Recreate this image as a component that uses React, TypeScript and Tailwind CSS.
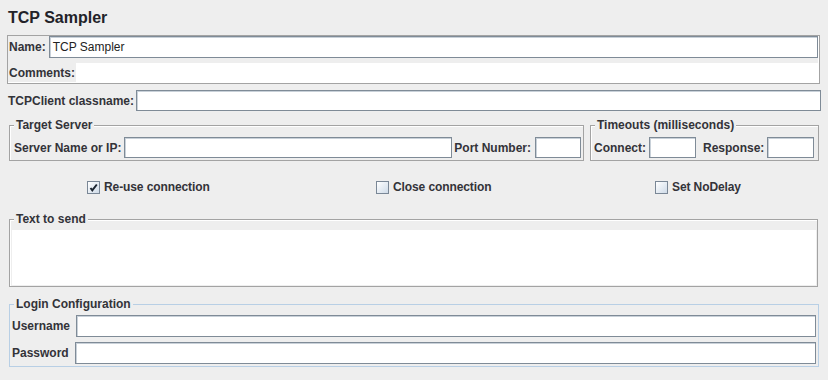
import React from 'react';

const label = 'font-bold text-[12px] leading-[14px] text-[#333339] whitespace-nowrap';
const field = 'bg-white border border-[#7f8b97] shadow-[inset_1px_1px_0_#c9d1d9]';

function Field({ className = '', value = '' }: { className?: string; value?: string }) {
    return (
        <div className={`${field} ${className} flex items-center pl-[3px] text-[12px] text-[#222]`}>
            {value}
        </div>
    );
}

function Check({ checked, text }: { checked?: boolean; text: string }) {
    return (
        <div className="flex items-center gap-[4px]">
            <div className="w-[13px] h-[13px] border border-[#7a8796] bg-gradient-to-br from-white to-[#cfdbe8] flex items-center justify-center">
                {checked && (
                    <svg width="9" height="9" viewBox="0 0 9 9">
                        <path d="M1.5 5 L3.3 7.3 L7.8 1.5" stroke="#1c2530" strokeWidth="2" fill="none" />
                    </svg>
                )}
            </div>
            <span className={`${label} tracking-[-0.1px]`}>{text}</span>
        </div>
    );
}

export default function App() {
    return (
        <div
            className="w-[828px] h-[380px] bg-[#eeeeee] flex flex-col overflow-hidden"
            style={{ fontFamily: '"Liberation Sans", Arial, sans-serif' }}
        >
            <div className="pl-[8px] pt-[8px] text-[16px] leading-[20px] font-bold text-[#222228]">TCP Sampler</div>

            {/* name / comments */}
            <div className="mt-[7px] ml-[7px] w-[813px] border border-[#a3a3a3] shadow-[inset_-1px_-1px_0_#fff] flex flex-col pb-[1px]">
                <div className="flex items-center h-[22px] pl-[1px] pr-[1px]">
                    <span className={label}>Name:</span>
                    <Field className="ml-[3px] flex-1 h-[22px]" value="TCP Sampler" />
                </div>
                <div className="flex items-center h-[19px] mt-[5px] pl-[1px]">
                    <span className={label}>Comments:</span>
                    <div className="ml-[1px] flex-1 h-[19px] bg-white" />
                </div>
            </div>

            <div className="mt-[6px] flex items-center pl-[8px] pr-[7px]">
                <span className={label}>TCPClient classname:</span>
                <Field className="ml-[2px] flex-1 h-[21px]" />
            </div>

            {/* servers */}
            <div className="mt-[7px] flex pl-[9px] gap-[6px]">
                <fieldset className="w-[575px] border border-[#a3a3a3] shadow-[inset_1px_1px_0_#fff] pl-[4px] pr-[2px] pt-[5px] pb-[2px]">
                    <legend className={`${label} px-[2px] bg-[#eeeeee]`}>Target Server</legend>
                    <div className="flex items-center">
                        <span className={label}>Server Name or IP:</span>
                        <Field className="ml-[3px] flex-1 h-[21px]" />
                        <span className={`${label} ml-[2px]`}>Port Number:</span>
                        <Field className="ml-[4px] w-[46px] h-[21px]" />
                    </div>
                </fieldset>
                <fieldset className="w-[229px] border border-[#a3a3a3] shadow-[inset_1px_1px_0_#fff] pl-[3px] pt-[5px] pb-[2px]">
                    <legend className={`${label} ml-[1px] px-[2px] bg-[#eeeeee]`}>Timeouts (milliseconds)</legend>
                    <div className="flex items-center">
                        <span className={`${label} w-[55px]`}>Connect:</span>
                        <Field className="w-[47px] h-[21px]" />
                        <span className={`${label} ml-[7px] w-[64px]`}>Response:</span>
                        <Field className="w-[47px] h-[21px]" />
                    </div>
                </fieldset>
            </div>

            {/* options */}
            <div className="mt-[16px] h-[20px] flex items-center pl-[87px]">
                <div className="w-[289px]"><Check checked text="Re-use connection" /></div>
                <div className="w-[279px]"><Check text="Close connection" /></div>
                <div><Check text="Set NoDelay" /></div>
            </div>

            {/* text to send */}
            <fieldset className="mt-[15px] ml-[9px] w-[809px] border border-[#a3a3a3] shadow-[inset_1px_1px_0_#fff] pl-[2px] pr-[1px] pt-[4px] pb-[1px]">
                <legend className={`${label} ml-[2px] px-[2px] bg-[#eeeeee] text-[#26344c]`}>Text to send</legend>
                <div className="h-[55px] bg-white" />
            </fieldset>

            {/* login */}
            <fieldset className="mt-[10px] ml-[9px] w-[810px] border border-[#b8cfe5] pl-[2px] pr-[2px] pt-[4px] pb-[2px]">
                <legend className={`${label} ml-[2px] px-[2px]`}>Login Configuration</legend>
                <div className="flex items-center">
                    <span className={label}>Username</span>
                    <Field className="ml-[6px] flex-1 h-[22px]" />
                </div>
                <div className="flex items-center mt-[5px]">
                    <span className={label}>Password</span>
                    <Field className="ml-[6px] flex-1 h-[22px]" />
                </div>
            </fieldset>
        </div>
    );
}
